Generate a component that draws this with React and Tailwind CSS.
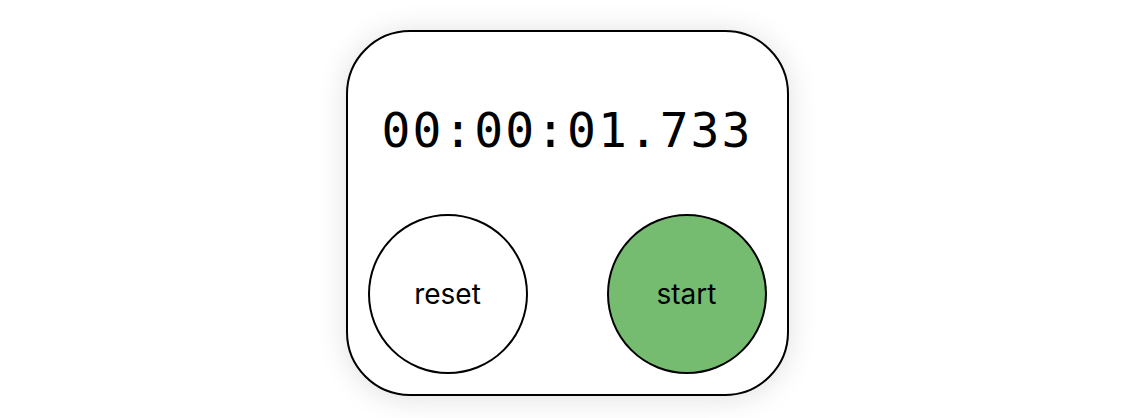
import React, {useState, useEffect, useRef} from 'react';

// hh:mm:ss.mmm
const formatTime = (ms) => {
    const h = Math.floor(ms / 3600000).toString().padStart(2, '0');
    const m = Math.floor((ms % 3600000) / 60000).toString().padStart(2, '0');
    const s = Math.floor((ms % 60000) / 1000).toString().padStart(2, '0');
    const milli = (ms % 1000).toString().padStart(3, '0');
    return `${h}:${m}:${s}.${milli}`;
};

export default function App() {
    const [elapsed, setElapsed] = useState(1733);
    const [running, setRunning] = useState(false);
    const startRef = useRef(0);

    useEffect(() => {
        if (!running) return;
        startRef.current = Date.now() - elapsed;
        const id = setInterval(() => setElapsed(Date.now() - startRef.current), 31);
        return () => clearInterval(id);
    }, [running]);

    const handleReset = () => {
        setRunning(false);
        setElapsed(0);
    };

    return (
        <div className="w-full h-[418px] bg-white flex justify-center pt-[30px]">
            <div className="w-[443px] h-[366px] rounded-[64px] border-2 border-black bg-white shadow-[0_2px_30px_rgba(0,0,0,0.13)] flex flex-col px-[20px] pb-[20px]">
                {/* Display */}
                <div className="flex-1 flex items-center justify-center pt-[14px]">
                    <span className="text-[48px] leading-none tracking-[2px] text-black font-['DejaVu_Sans_Mono',monospace] tabular-nums">
                        {formatTime(elapsed)}
                    </span>
                </div>

                {/* Controls */}
                <div className="flex items-center justify-between">
                    <button
                        onClick={handleReset}
                        className="w-[160px] h-[160px] rounded-full border-2 border-black bg-white flex items-center justify-center text-[28px] text-black font-['Inter',sans-serif]"
                    >
                        reset
                    </button>
                    <button
                        onClick={() => setRunning(!running)}
                        className="w-[160px] h-[160px] rounded-full border-2 border-black bg-[#75bc71] flex items-center justify-center text-[28px] text-black font-['Inter',sans-serif]"
                    >
                        {running ? 'stop' : 'start'}
                    </button>
                </div>
            </div>
        </div>
    );
}
